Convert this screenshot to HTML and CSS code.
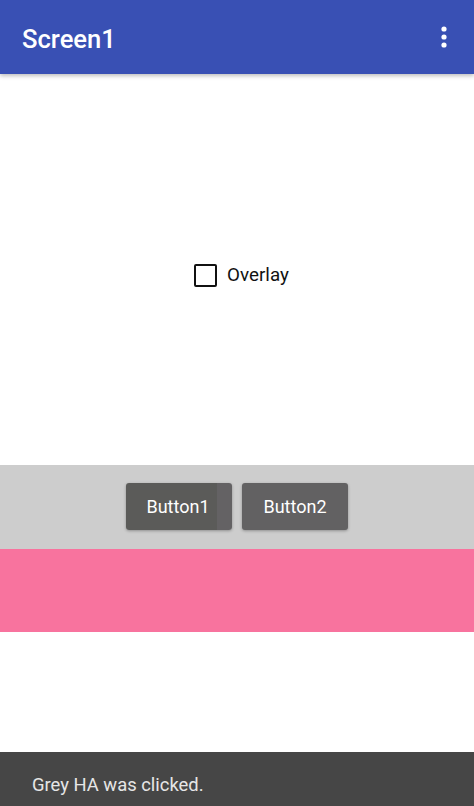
FILE: index.html
```html
<!DOCTYPE html>
<html>
<head>
<meta charset="utf-8">
<link rel="stylesheet" href="styles.css">
</head>
<body>
<div class="screen">
  <header class="appbar">
    <span class="title">Screen1</span>
    <svg class="menu" width="8" height="24" viewBox="0 0 8 24">
      <circle cx="4" cy="4" r="2.6" fill="#fff"/>
      <circle cx="4" cy="12" r="2.6" fill="#fff"/>
      <circle cx="4" cy="20" r="2.6" fill="#fff"/>
    </svg>
  </header>
  <main class="content">
    <div class="top">
      <label class="check">
        <span class="box"></span>
        <span class="label">Overlay</span>
      </label>
    </div>
    <div class="grey">
      <div class="btn btn1">Button1</div>
      <div class="btn">Button2</div>
    </div>
    <div class="pink"></div>
    <div class="rest"></div>
  </main>
  <div class="snackbar">Grey HA was clicked.</div>
</div>
</body>
</html>
```
FILE: styles.css
```css
html, body {
  margin: 0;
  padding: 0;
}
body {
  font-family: Roboto, "Noto Sans", sans-serif;
  background: #fff;
}
.screen {
  width: 474px;
  height: 806px;
  display: flex;
  flex-direction: column;
  overflow: hidden;
}
.appbar {
  height: 74px;
  flex: none;
  background: #3950b4;
  display: flex;
  align-items: center;
  justify-content: space-between;
  padding: 0 26px 0 22px;
  box-sizing: border-box;
  box-shadow: 0 2px 4px rgba(0,0,0,0.25);
  position: relative;
  z-index: 1;
}
.title {
  color: #fff;
  font-size: 25.6px;
  font-weight: 500;
  margin-top: 3px;
}
.menu {
  margin-top: -1px;
}
.content {
  flex: 1;
  display: flex;
  flex-direction: column;
}
.top {
  height: 391px;
  display: flex;
  align-items: center;
  justify-content: center;
}
.check {
  display: flex;
  align-items: center;
  gap: 10px;
  margin-left: 9px;
  margin-top: 11px;
}
.box {
  width: 19px;
  height: 19px;
  border: 2.5px solid #111;
  border-radius: 2px;
}
.label {
  font-size: 18.8px;
  color: #111;
}
.grey {
  height: 84px;
  background: #cdcdcd;
  display: flex;
  justify-content: center;
  align-items: flex-start;
  gap: 10px;
  padding-top: 18px;
  box-sizing: border-box;
}
.btn {
  width: 106px;
  height: 47px;
  background: #626162;
  border-radius: 3px;
  color: #fff;
  font-size: 18px;
  display: flex;
  align-items: center;
  justify-content: center;
  box-shadow: 0 1px 3px rgba(0,0,0,0.3);
}
.btn1 {
  background: linear-gradient(to right, #5b5b59 0, #5b5b59 86%, #646264 86%, #646264 100%);
  padding-right: 2px;
  box-sizing: border-box;
}
.pink {
  height: 83px;
  background: #f8739e;
}
.rest {
  flex: 1;
}
.snackbar {
  height: 54px;
  flex: none;
  background: #464646;
  color: #e6e6e6;
  font-size: 18.4px;
  display: flex;
  align-items: center;
  padding-left: 32px;
  padding-top: 10px;
  box-sizing: border-box;
}
```
